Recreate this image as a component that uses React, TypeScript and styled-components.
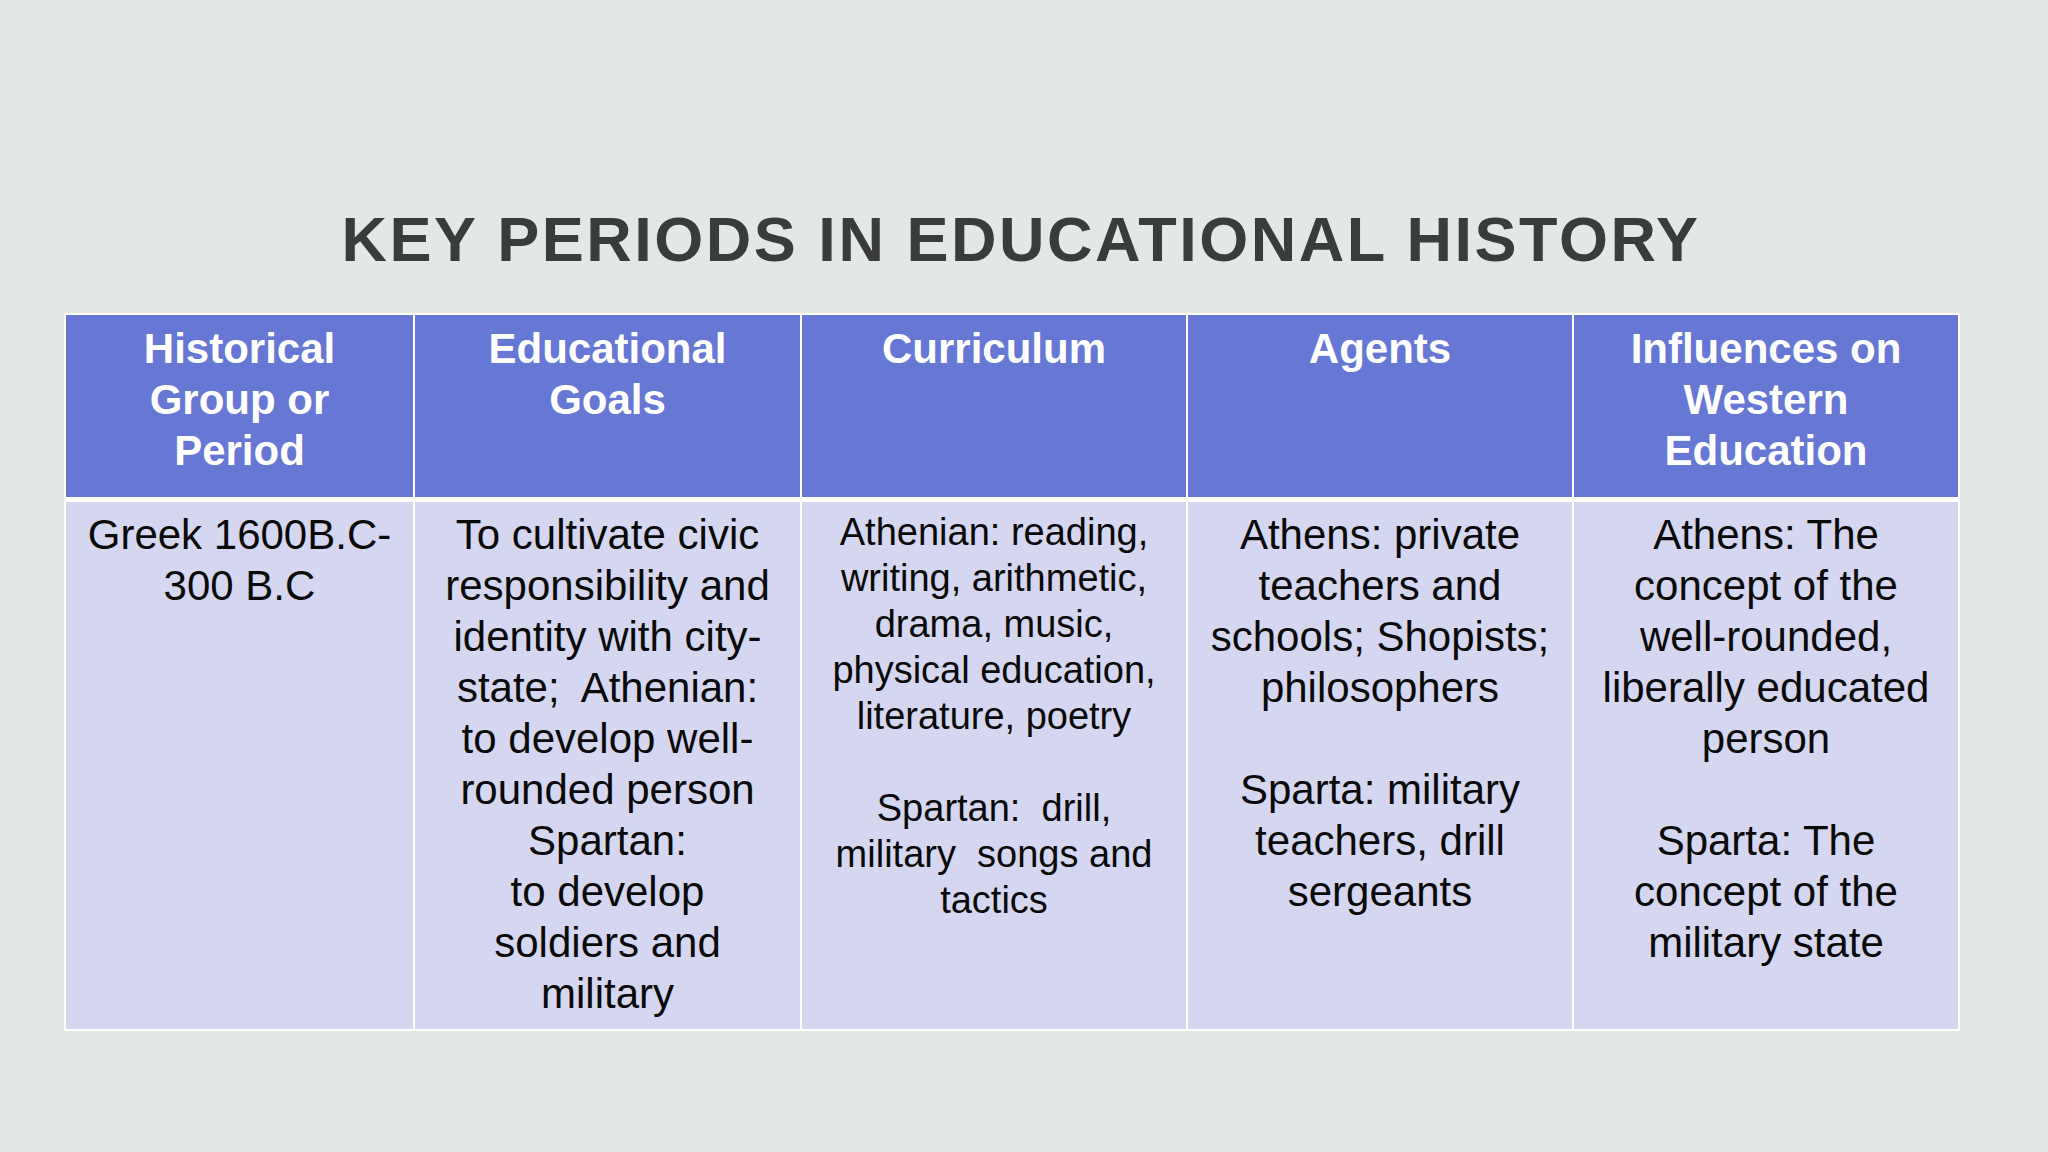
import React from "react";
import styled, { createGlobalStyle } from "styled-components";

const GlobalStyle = createGlobalStyle`
  html, body {
    margin: 0;
    padding: 0;
    background: #e2e8e5;
  }
  body {
    font-family: "Liberation Sans", Arial, sans-serif;
  }
`;

const Slide = styled.main`
  width: 2048px;
  height: 1152px;
  box-sizing: border-box;
  padding: 203px 70px 0 64px;
  display: flex;
  flex-direction: column;
  background: #e2e8e5;
`;

const Title = styled.h1`
  margin: 0 0 38px 0;
  font-family: "Liberation Sans", Arial, sans-serif;
  font-weight: 700;
  font-size: 63px;
  line-height: 72px;
  letter-spacing: 2.5px;
  color: #3a3c3c;
  text-align: center;
`;

const Table = styled.section`
  display: grid;
  grid-template-columns: 347px 385px 384px 384px 384px;
  grid-template-rows: 182px auto;
  column-gap: 2px;
  row-gap: 5px;
  padding: 2px;
  background: #ffffff;
  width: max-content;
`;

const HeaderCell = styled.div`
  background: #6677d4;
  color: #ffffff;
  font-weight: 700;
  font-size: 42px;
  line-height: 51px;
  text-align: center;
  padding: 8px 4px 0;
`;

const BodyCell = styled.div<{ $small?: boolean }>`
  background: #d5d6f0;
  color: #0a0a0a;
  font-size: ${(p) => (p.$small ? "38px" : "42px")};
  line-height: ${(p) => (p.$small ? "46px" : "51px")};
  text-align: center;
  padding: 7px 2px 10px;
`;

const Paragraph = styled.p`
  margin: 0;
  white-space: nowrap;
  & + & {
    margin-top: 1lh;
  }
`;

type Col = {
  head: string[];
  body: string[][];
  small?: boolean;
};

const columns: Col[] = [
  {
    head: ["Historical", "Group or", "Period"],
    body: [["Greek 1600B.C-", "300 B.C"]],
  },
  {
    head: ["Educational", "Goals"],
    body: [
      [
        "To cultivate civic",
        "responsibility and",
        "identity with city-",
        "state;\u00a0 Athenian:",
        "to develop well-",
        "rounded person",
        "Spartan:",
        "to develop",
        "soldiers and",
        "military",
      ],
    ],
  },
  {
    head: ["Curriculum"],
    small: true,
    body: [
      [
        "Athenian: reading,",
        "writing, arithmetic,",
        "drama, music,",
        "physical education,",
        "literature, poetry",
      ],
      ["Spartan:\u00a0 drill,", "military\u00a0 songs and", "tactics"],
    ],
  },
  {
    head: ["Agents"],
    body: [
      ["Athens: private", "teachers and", "schools; Shopists;", "philosophers"],
      ["Sparta: military", "teachers, drill", "sergeants"],
    ],
  },
  {
    head: ["Influences on", "Western", "Education"],
    body: [
      [
        "Athens: The",
        "concept of the",
        "well-rounded,",
        "liberally educated",
        "person",
      ],
      ["Sparta: The", "concept of the", "military state"],
    ],
  },
];

const Lines: React.FC<{ lines: string[] }> = ({ lines }) => (
  <>
    {lines.map((l, i) => (
      <React.Fragment key={i}>
        {i > 0 && <br />}
        {l}
      </React.Fragment>
    ))}
  </>
);

export default function App() {
  return (
    <>
      <GlobalStyle />
      <Slide>
        <Title>KEY PERIODS IN EDUCATIONAL HISTORY</Title>
        <Table>
          {columns.map((c, i) => (
            <HeaderCell key={"h" + i}>
              <Lines lines={c.head} />
            </HeaderCell>
          ))}
          {columns.map((c, i) => (
            <BodyCell key={"b" + i} $small={c.small}>
              {c.body.map((para, j) => (
                <Paragraph key={j}>
                  <Lines lines={para} />
                </Paragraph>
              ))}
            </BodyCell>
          ))}
        </Table>
      </Slide>
    </>
  );
}
